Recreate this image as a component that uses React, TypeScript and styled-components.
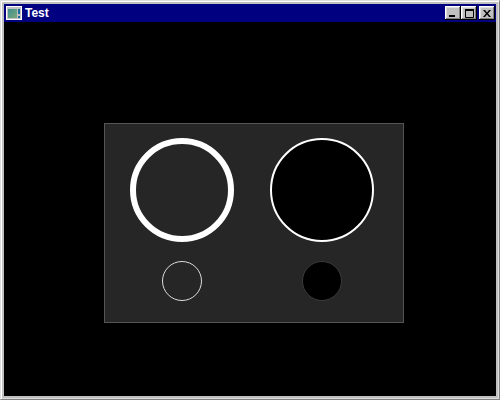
import React from 'react'
import styled, { createGlobalStyle } from 'styled-components'

const GlobalStyle = createGlobalStyle`
    html, body {
        margin: 0;
        padding: 0;
        background: #000;
    }
`

const Window = styled.div`
    box-sizing: border-box;
    width: 500px;
    height: 400px;
    display: flex;
    flex-direction: column;
    padding: 3px;
    background: #c0c0c0;
    border-top: 1px solid #dfdfdf;
    border-left: 1px solid #dfdfdf;
    border-right: 1px solid #808080;
    border-bottom: 1px solid #808080;
    box-shadow: inset 1px 1px 0 #ffffff, inset -1px -1px 0 #dcdcdc;
`

const TitleBar = styled.div`
    height: 18px;
    flex: none;
    display: flex;
    align-items: center;
    gap: 3px;
    padding: 0 1px 0 2px;
    background: #000080;
`

const Title = styled.span`
    flex: 1;
    color: #fff;
    font-family: 'Liberation Sans', Arial, sans-serif;
    font-weight: bold;
    font-size: 12px;
    line-height: 18px;
`

const TitleButtons = styled.div`
    display: flex;
    align-items: center;
`

const TitleButton = styled.div<{ $gap?: boolean }>`
    box-sizing: border-box;
    width: 16px;
    height: 14px;
    margin-left: ${(p) => (p.$gap ? '2px' : '0')};
    background: #c0c0c0;
    display: flex;
    align-items: center;
    justify-content: center;
    box-shadow: inset -1px -1px 0 #000, inset 1px 1px 0 #fff, inset -2px -2px 0 #808080, inset 2px 2px 0 #dfdfdf;
`

const Content = styled.div`
    flex: 1;
    background: #000;
    padding: 101px 0 0 100px;
`

const Panel = styled.div`
    box-sizing: border-box;
    width: 300px;
    height: 200px;
    background: #262626;
    border: 1px solid #555;
    display: grid;
    grid-template-columns: 104px 104px;
    column-gap: 36px;
    row-gap: 19px;
    justify-items: center;
    align-items: start;
    align-content: start;
    padding: 14px 0 0 25px;
`

const Circle = styled.div<{ $size: number; $ring: number; $color: string; $fill: string }>`
    box-sizing: border-box;
    width: ${(p) => p.$size}px;
    height: ${(p) => p.$size}px;
    border-radius: 50%;
    border: ${(p) => p.$ring}px solid ${(p) => p.$color};
    background: ${(p) => p.$fill};
`

const AppIcon = () => (
    <svg width="16" height="14" viewBox="0 0 16 14">
        <defs>
            <linearGradient id="g" x1="0" y1="0" x2="1" y2="1">
                <stop offset="0" stopColor="#3a8f8f" />
                <stop offset="1" stopColor="#7fa87a" />
            </linearGradient>
        </defs>
        <rect x="0" y="0" width="16" height="14" fill="#fff" />
        <rect x="1" y="1" width="14" height="12" fill="#c0c0c0" />
        <rect x="2" y="3" width="9" height="9" fill="url(#g)" />
        <rect x="12" y="3" width="2" height="5" fill="#1a6a9a" />
        <rect x="12" y="10" width="2" height="2" fill="#1a6a9a" />
    </svg>
)

export default function App() {
    return (
        <>
            <GlobalStyle />
            <Window>
                <TitleBar>
                    <AppIcon />
                    <Title>Test</Title>
                    <TitleButtons>
                        <TitleButton>
                            <svg width="8" height="8" viewBox="0 0 8 8">
                                <rect x="0" y="6" width="6" height="2" fill="#000" />
                            </svg>
                        </TitleButton>
                        <TitleButton>
                            <svg width="9" height="9" viewBox="0 0 9 9">
                                <path d="M0.5 1.5 H8.5 V8.5 H0.5 Z" fill="none" stroke="#000" />
                                <rect x="0" y="0" width="9" height="2" fill="#000" />
                            </svg>
                        </TitleButton>
                        <TitleButton $gap>
                            <svg width="8" height="7" viewBox="0 0 8 7">
                                <path d="M0 0 L2 0 L4 2.5 L6 0 L8 0 L5 3.5 L8 7 L6 7 L4 4.5 L2 7 L0 7 L3 3.5 Z" fill="#000" />
                            </svg>
                        </TitleButton>
                    </TitleButtons>
                </TitleBar>
                <Content>
                    <Panel>
                        <Circle $size={104} $ring={6} $color="#fff" $fill="transparent" />
                        <Circle $size={104} $ring={2} $color="#fff" $fill="#000" />
                        <Circle $size={40} $ring={1} $color="#dcdcdc" $fill="transparent" />
                        <Circle $size={40} $ring={1} $color="#3a3a3a" $fill="#000" />
                    </Panel>
                </Content>
            </Window>
        </>
    )
}
